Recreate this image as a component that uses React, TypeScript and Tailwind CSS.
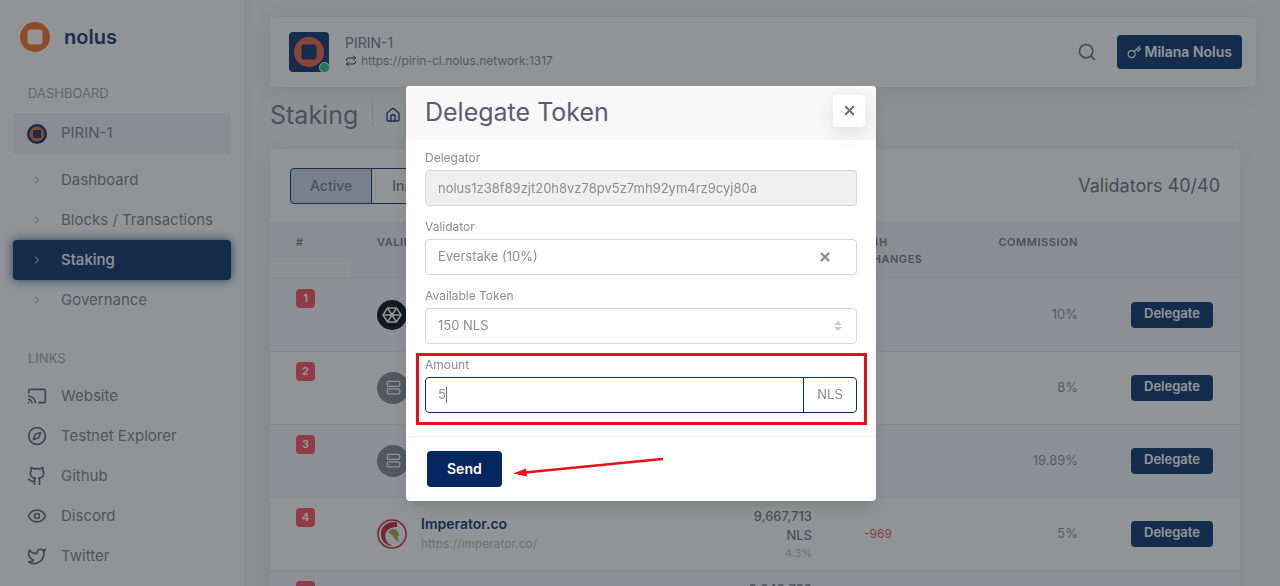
import { useState } from "react";
import type { ReactNode } from "react";
import {
  Cast,
  ChevronRight,
  Compass,
  Eye,
  Github,
  Home,
  Repeat,
  Search,
  Server,
  Twitter,
  X,
} from "lucide-react";

const menu = ["Dashboard", "Blocks / Transactions", "Staking", "Governance"];

const links = [
  { label: "Website", icon: Cast },
  { label: "Testnet Explorer", icon: Compass },
  { label: "Github", icon: Github },
  { label: "Discord", icon: Eye },
  { label: "Twitter", icon: Twitter },
];

const validators = [
  { name: "Everstake", url: "https://everstake.one", power: "12,345,018", share: "5.5%", change: "0", commission: "10%", logo: "everstake" },
  { name: "Stakin", url: "https://stakin.com", power: "11,207,441", share: "5%", change: "", commission: "8%", logo: "" },
  { name: "Allnodes", url: "https://allnodes.com", power: "10,114,902", share: "4.5%", change: "", commission: "19.89%", logo: "" },
  { name: "Imperator.co", url: "https://imperator.co/", power: "9,667,713", share: "4.3%", change: "-969", commission: "5%", logo: "imperator" },
  { name: "Chorus One", url: "https://chorus.one", power: "9,249,788", share: "4.1%", change: "", commission: "5%", logo: "" },
];

function NolusMark({ className }: { className: string }) {
  return (
    <svg viewBox="0 0 40 40" className={className} aria-hidden="true">
      <rect width="40" height="40" rx="4" fill="#0b2f6b" />
      <circle cx="20" cy="20" r="15" fill="#f2613a" />
      <rect x="12.5" y="12.5" width="15" height="15" rx="2" fill="#0b2f6b" />
    </svg>
  );
}

function KeyIcon() {
  return (
    <svg viewBox="0 0 24 24" className="size-3.5" fill="none" stroke="currentColor" strokeWidth="2" strokeLinecap="round" strokeLinejoin="round" aria-hidden="true">
      <circle cx="8" cy="15.5" r="6" />
      <path d="M12.5 11 L22 2 M16 7.5 L19.5 10.5 L22.5 7 L19 4.5" />
    </svg>
  );
}

function ValidatorLogo({ logo }: { logo: string }) {
  if (logo === "everstake") {
    return (
      <svg viewBox="0 0 30 30" className="size-[30px] shrink-0" aria-hidden="true">
        <circle cx="15" cy="15" r="15" fill="#07090d" />
        <g fill="none" stroke="#fff" strokeWidth="1.5" strokeLinejoin="round">
          <path d="M10.5 8 h9 l4.5 7 -4.5 7 h-9 L6 15z" />
          <path d="M10.5 8 L15 15 L10.5 22 M19.5 8 L15 15 L19.5 22 M6 15 h9 M15 15 h9" />
        </g>
        <circle cx="15" cy="15" r="1.8" fill="#fff" />
      </svg>
    );
  }
  if (logo === "imperator") {
    return (
      <svg viewBox="0 0 30 30" className="size-[30px] shrink-0" aria-hidden="true">
        <circle cx="15" cy="15" r="14" fill="#fff" stroke="#c81f3c" strokeWidth="1.5" />
        <path d="M20 3.5 C11 1.5 4 7 4 15 C4 22 9 26.5 15 27 C9.5 24 7.5 19.5 8.5 15 C9.5 10.5 14 8 20 8z" fill="#c81f3c" />
        <path d="M11 13 C13 9.5 18 9 20.5 12 L22.5 16.5 L20.5 17 L22 23 C19 21.5 17 19.5 16 17z" fill="#b59a5b" />
      </svg>
    );
  }
  return (
    <span className="flex size-8 shrink-0 items-center justify-center rounded-full bg-[#82868b] text-white">
      <Server size={15} strokeWidth={2} />
    </span>
  );
}

function Field({ id, label, children }: { id: string; label: string; children: ReactNode }) {
  return (
    <div className="relative mb-[13px]">
      <label htmlFor={id} className="block pb-1 text-xs leading-4 text-[#8d8b98]">
        {label}
      </label>
      {children}
    </div>
  );
}

function Sidebar() {
  return (
    <aside className="w-[244px] shrink-0 bg-white px-[13px] shadow-[0_0_15px_rgba(34,41,47,0.05)]">
      <a href="#" className="flex items-center gap-3.5 pt-[22px] pl-[7px] text-xl font-semibold text-[#14306e]">
        <svg viewBox="0 0 30 30" className="size-[30px]" aria-hidden="true">
          <circle cx="15" cy="15" r="15" fill="#ff6a1a" />
          <rect x="7.5" y="7.5" width="15" height="15" rx="3" fill="#fff" />
        </svg>
        nolus
      </a>

      <h6 className="mt-[31px] pl-[15px] text-[13px] leading-5 text-[#a6a4b0]">DASHBOARD</h6>
      <nav>
        <a href="#" className="mt-2.5 mb-[6px] flex h-[41px] items-center gap-3.5 bg-[#f3f3f4] pl-3.5 text-[15px] text-[#84818f]">
          <svg viewBox="0 0 20 20" className="size-5" aria-hidden="true">
            <circle cx="10" cy="10" r="10" fill="#0b2f6b" />
            <circle cx="10" cy="10" r="7.5" fill="#f2613a" />
            <rect x="6" y="6" width="8" height="8" rx="1" fill="#0b2f6b" />
          </svg>
          PIRIN-1
        </a>
        {menu.map((item) => (
          <a
            key={item}
            href="#"
            className={
              item === "Staking"
                ? "flex h-10 items-center gap-[18px] rounded bg-[#0b2f6b] pl-[18px] text-[15px] font-medium text-white shadow-[0_0_10px_1px_rgba(11,47,107,0.7)]"
                : "flex h-10 items-center gap-[18px] pl-[18px] text-[15px] text-[#84818f]"
            }
          >
            <ChevronRight size={12} />
            {item}
          </a>
        ))}
      </nav>

      <h6 className="mt-7 mb-2 pl-[15px] text-[13px] leading-5 text-[#a6a4b0]">LINKS</h6>
      <nav>
        {links.map(({ label, icon: Icon }) => (
          <a key={label} href="#" className="flex h-10 items-center gap-3.5 pl-3.5 text-[15px] text-[#84818f]">
            <Icon size={20} strokeWidth={2} className="text-[#625f6e]" />
            {label}
          </a>
        ))}
      </nav>
    </aside>
  );
}

function TopBar() {
  return (
    <header className="mt-[17px] flex h-[70px] items-center rounded bg-white pr-3.5 pl-[19px] shadow-[0_4px_24px_rgba(34,41,47,0.1)]">
      <div className="relative">
        <NolusMark className="size-10" />
        <span className="absolute -right-px -bottom-px size-[11px] rounded-full border border-white bg-[#28c76f]" />
      </div>
      <div className="ml-4">
        <p className="text-sm leading-[18px] text-[#7a7787]">PIRIN-1</p>
        <p className="flex items-center gap-1 text-xs leading-[18px] text-[#8d8b98]">
          <Repeat size={12} className="text-[#2f2b3d]" />
          https://pirin-cl.nolus.network:1317
        </p>
      </div>
      <button type="button" aria-label="Search" className="ml-auto text-[#6e6b7b]">
        <Search size={20} />
      </button>
      <button type="button" className="ml-5 flex h-[34px] items-center gap-1 rounded bg-[#0b2f6b] px-2.5 text-sm font-semibold text-white">
        <KeyIcon />
        Milana Nolus
      </button>
    </header>
  );
}

function ValidatorTable() {
  return (
    <section className="mt-[18px] mr-4 overflow-hidden rounded bg-white shadow-[0_4px_24px_rgba(34,41,47,0.1)]">
      <div className="flex h-[73px] items-center justify-between px-5">
        <div className="flex h-9 text-sm font-medium text-[#7a7787]">
          <button type="button" className="rounded-l border border-[#0b2f6b] bg-[#d0d9e8] px-[19px]">
            Active
          </button>
          <button type="button" className="rounded-r border border-l-0 border-[#0b2f6b] px-5">
            Inactive
          </button>
        </div>
        <h4 className="text-lg text-[#6e6b7b]">Validators 40/40</h4>
      </div>
      <table className="w-full table-fixed">
        <colgroup>
          <col className="w-[81px]" />
          <col />
          <col className="w-[170px]" />
          <col className="w-[114px]" />
          <col className="w-[152px]" />
          <col className="w-[136px]" />
        </colgroup>
        <thead>
          <tr className="h-14 bg-[#f3f2f7] align-top text-[11px] leading-[17px] tracking-wider text-[#7a7787]">
            <th className="text-left font-semibold">
              <div className="h-10 pt-3 pl-[26px]">#</div>
              <div className="h-[15px] bg-[#fafafa]" />
            </th>
            <th className="px-[26px] pt-3 text-left font-semibold">VALIDATOR</th>
            <th className="px-[26px] pt-3 text-right font-semibold">VOTING POWER</th>
            <th className="px-[26px] pt-3 text-left font-semibold">24H CHANGES</th>
            <th className="px-[26px] pt-3 text-right font-semibold">COMMISSION</th>
            <th className="px-[26px] pt-3" aria-label="Operation" />
          </tr>
        </thead>
        <tbody>
          {validators.map((v, i) => (
            <tr key={v.name} className="h-[73px] border-t border-[#ebe9f1] text-[13px] text-[#8d8b98] odd:bg-[#f8f8fb]">
              <td className="pt-2.5 pl-[26px] align-top">
                <span className="flex h-[19px] w-[19px] items-center justify-center rounded bg-[#ff4d5e] text-[11px] font-bold text-white">
                  {i + 1}
                </span>
              </td>
              <td className="px-[26px]">
                <div className="flex items-center gap-3.5">
                  <ValidatorLogo logo={v.logo} />
                  <div>
                    <p className="text-sm leading-5 font-semibold text-[#0b2f6b]">{v.name}</p>
                    <p className="text-xs leading-5 text-[#b9b9c3]">{v.url}</p>
                  </div>
                </div>
              </td>
              <td className="pr-[26px] pl-20 text-right">
                <p className="leading-[19px] font-medium text-[#7a7787]">{v.power} NLS</p>
                <p className="text-[11px] leading-4 text-[#b9b9c3]">{v.share}</p>
              </td>
              <td className={v.change === "0" ? "px-[26px] text-xs text-[#28c76f]" : "px-[26px] text-xs text-[#ea5455]"}>
                {v.change}
              </td>
              <td className="px-[26px] text-right">{v.commission}</td>
              <td className="text-center">
                <button type="button" className="h-[26px] rounded bg-[#0b2f6b] px-[13px] pb-0.5 text-[13px] font-semibold text-white">
                  Delegate
                </button>
              </td>
            </tr>
          ))}
        </tbody>
      </table>
    </section>
  );
}

function DelegateModal() {
  const [validator, setValidator] = useState("Everstake (10%)");
  const [amount, setAmount] = useState("5");

  return (
    <div className="fixed inset-0 flex items-center justify-center bg-[#22292f]/50 pl-0.5">
      <div role="dialog" aria-labelledby="modal-title" className="w-full max-w-[470px] rounded bg-white text-[#6e6b7b] shadow-lg">
        <div className="flex h-[54px] items-center justify-between rounded-t bg-[#f8f8f8] pr-[11px] pl-[19px]">
          <h2 id="modal-title" className="text-[25px] text-[#5e5873]">Delegate Token</h2>
          <button type="button" aria-label="Close" className="mb-1 flex size-8 items-center justify-center rounded bg-white shadow-[0_5px_20px_rgba(34,41,47,0.12)]">
            <X size={15} strokeWidth={3} />
          </button>
        </div>

        <div className="px-[19px] pt-2.5 pb-2.5 text-[13px] text-[#8d8b98]">
          <Field id="delegator" label="Delegator">
            <input id="delegator" readOnly value="nolus1z38f89zjt20h8vz78pv5z7mh92ym4rz9cyj80a" className="h-9 w-full rounded border border-[#d8d6de] bg-[#efefef] px-3 outline-none" />
          </Field>
          <Field id="validator" label="Validator">
            <div className="flex h-9 rounded border border-[#d8d6de]">
              <input id="validator" value={validator} onChange={(e) => setValidator(e.target.value)} className="min-w-0 flex-1 pl-3 outline-none" />
              <button type="button" aria-label="Clear" onClick={() => setValidator("")} className="pr-6">
                <X size={14} strokeWidth={4} />
              </button>
            </div>
          </Field>
          <Field id="token" label="Available Token">
            <select id="token" className="h-9 w-full appearance-none rounded border border-[#d8d6de] bg-white px-3 outline-none">
              <option>150 NLS</option>
            </select>
            <svg viewBox="0 0 10 12" className="pointer-events-none absolute right-3.5 bottom-3 h-3 w-2.5" fill="#c8c7ce" aria-hidden="true">
              <path d="M5 1 L9 5 H1z M5 11 L9 7 H1z" />
            </svg>
          </Field>
          <Field id="amount" label="Amount">
            <div className="flex h-9 rounded border border-[#0b2f6b]">
              <input id="amount" value={amount} onChange={(e) => setAmount(e.target.value)} className="min-w-0 flex-1 px-3 caret-transparent outline-none" />
              <span className="flex w-[53px] items-center justify-center border-l border-[#0b2f6b]">NLS</span>
            </div>
            <span className="absolute bottom-2.5 left-[21px] h-4 w-px bg-[#6e6b7b]" />
            <span className="pointer-events-none absolute -top-1 -right-2.5 -bottom-3 -left-[9px] border-3 border-[#e5101a]" />
          </Field>
        </div>

        <div className="relative border-t border-[#f3f2f5] px-[21px] py-3.5">
          <button type="button" className="h-9 rounded bg-[#03275f] px-5 text-sm font-semibold text-white">
            Send
          </button>
          <svg viewBox="0 0 152 24" className="pointer-events-none absolute top-[18px] left-[107px] h-6 w-[152px]" aria-hidden="true">
            <path d="M12 17.5 L149 4" stroke="#e5101a" strokeWidth="2.5" strokeLinecap="round" />
            <path d="M0 18.5 L13 13.5 L14 21.5z" fill="#f0101a" />
          </svg>
        </div>
      </div>
    </div>
  );
}

export default function App() {
  return (
    <div className="flex h-screen overflow-hidden bg-[#f8f8f8] font-['Inter',sans-serif]">
      <Sidebar />
      <main className="min-w-0 flex-1 pr-6 pl-[26px]">
        <TopBar />
        <div className="mt-3 flex h-8 items-center">
          <h1 className="border-r border-[#d6dce1] pr-3.5 text-[25px] leading-6 text-[#7a7787]">Staking</h1>
          <a href="#" aria-label="Home" className="ml-3 text-[#14306e]">
            <Home size={16} />
          </a>
        </div>
        <ValidatorTable />
      </main>
      <DelegateModal />
    </div>
  );
}
